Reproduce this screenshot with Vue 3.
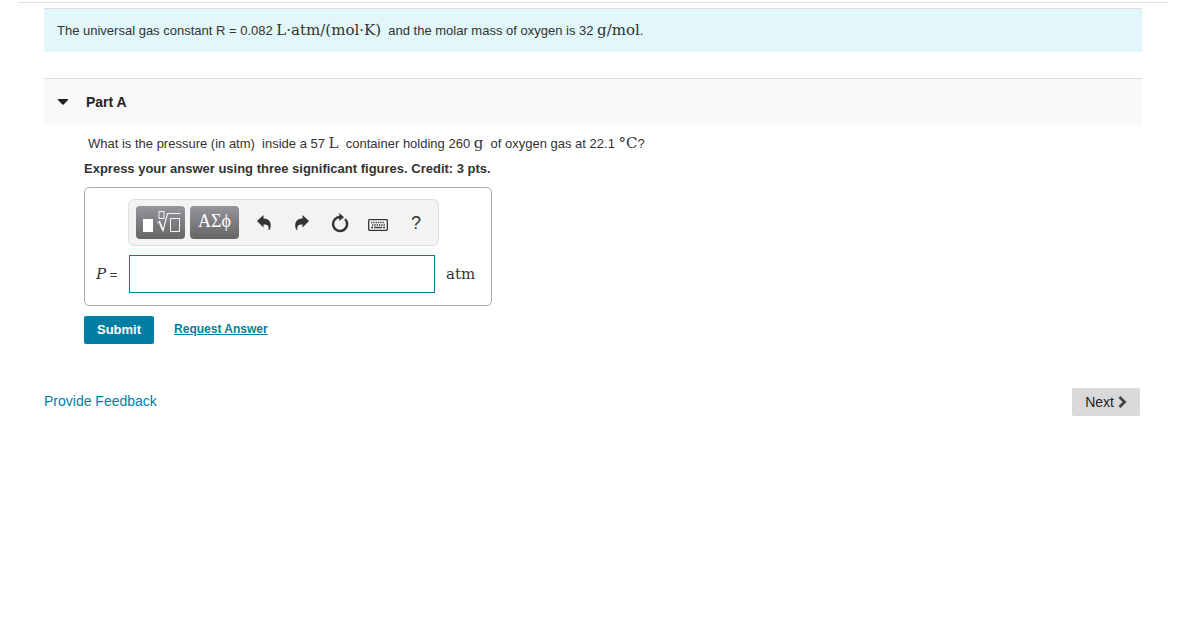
<script setup>
import { ref } from 'vue'

const answer = ref('')
const open = ref(true)
</script>

<template>
  <main class="page">
    <hr class="rule" />
    <div class="content">
      <p class="banner">
        The universal gas constant R = 0.082 <span class="math">L·atm/(mol·K)</span>&nbsp; and the molar mass of oxygen is 32 <span class="math">g/mol</span>.
      </p>

      <section>
        <h2 class="part">
          <button class="part-toggle" type="button" :aria-expanded="open" @click="open = !open">
            <svg width="12" height="8" viewBox="0 0 12 8" aria-hidden="true"><path d="M1 1h10q.4.6 0 1L6.600 6.500q-.6.5-1.200 0L1 2Q.6 1.500 1 1Z" fill="#222" /></svg>
            <span>Part A</span>
          </button>
        </h2>

        <form v-show="open" class="body" @submit.prevent>
          <p class="question">
            What is the pressure (in atm)&nbsp; inside a 57 <span class="math">L</span>&nbsp; container holding 260 <span class="math">g</span>&nbsp; of oxygen gas at 22.1 <span class="math">°C</span>?
          </p>
          <p class="instructions">Express your answer using three significant figures. Credit: 3 pts.</p>

          <div class="answer-box">
            <div class="toolbar" role="toolbar" aria-label="Equation tools">
              <button class="key" type="button" aria-label="Templates">
                <svg width="49" height="33" viewBox="0 0 49 33" aria-hidden="true">
                  <rect x="7" y="13" width="10" height="13" fill="#fff" />
                  <g fill="none" stroke="#f4f4f4">
                    <rect x="23" y="5.500" width="5" height="7" />
                    <path d="M21.500 17l2-1.500 3.500 9L31.500 7.500H44.500" stroke-width="1.200" />
                    <path d="M23.500 16l3.300 8" stroke-width="1.800" />
                    <rect x="34.500" y="12.500" width="9" height="13" />
                  </g>
                </svg>
              </button>
              <button class="key greek" type="button" aria-label="Greek symbols">ΑΣϕ</button>
              <div class="tools">
                <button class="tool" type="button" aria-label="Undo">
                  <svg width="16" height="18" viewBox="0 0 16 18" aria-hidden="true"><path d="M1 7L7.500 1v3.600c6 .2 8.500 4 6.700 10.400l-1.700 1.500c.8-4.200-.2-6.100-5-6.100V13.500Z" fill="#333" /></svg>
                </button>
                <button class="tool" type="button" aria-label="Redo">
                  <svg width="16" height="18" viewBox="0 0 16 18" aria-hidden="true"><path d="M15 7L8.500 1v3.600C2.500 4.800 0 8.600 1.800 15l1.700 1.500C2.700 12.300 3.700 10.400 8.500 10.400V13.500Z" fill="#333" /></svg>
                </button>
                <button class="tool" type="button" aria-label="Reset">
                  <svg width="18" height="20" viewBox="0 0 18 20" aria-hidden="true"><path d="M9.500 4A7 7 0 1 0 14 6" fill="none" stroke="#333" stroke-width="2.400" /><path d="M8.300 0L13 4.300 8.300 8Z" fill="#333" /></svg>
                </button>
                <button class="tool low" type="button" aria-label="Keyboard shortcuts">
                  <svg width="20" height="12" viewBox="0 0 20 12" aria-hidden="true">
                    <rect x=".7" y=".7" width="18.600" height="10.600" rx=".8" fill="#fff" stroke="#333" stroke-width="1.300" />
                    <path d="M3 3.500h14M4 6h13" stroke="#333" stroke-width="1.400" stroke-dasharray="1.400 .9" />
                    <path d="M3 8.500h2M6 8.500h8M15 8.500h2" stroke="#333" stroke-width="1.300" />
                  </svg>
                </button>
                <button class="tool help" type="button" aria-label="Help">?</button>
              </div>
            </div>

            <div class="entry">
              <label for="answer"><i>P</i> =</label>
              <input id="answer" v-model="answer" type="text" autocomplete="off" />
              <span class="unit">atm</span>
            </div>
          </div>

          <div class="actions">
            <button class="submit" type="submit">Submit</button>
            <a class="request" href="#">Request Answer</a>
          </div>
        </form>
      </section>

      <footer class="footer">
        <a class="feedback" href="#">Provide Feedback</a>
        <button class="next" type="button">
          Next
          <svg width="9" height="12" viewBox="0 0 9 12" aria-hidden="true"><path d="M1.500 1L6.500 6l-5 5" fill="none" stroke="#444" stroke-width="2.800" /></svg>
        </button>
      </footer>
    </div>
  </main>
</template>

<style>
body {
  background: #fff;
}
</style>

<style scoped>
.page {
  padding: 2px 25px 0 18px;
  font: 13px/20px "Liberation Sans", Arial, sans-serif;
  color: #333;
}
.page * {
  box-sizing: border-box;
}
p,
h2 {
  margin: 0;
}
button {
  margin: 0;
  padding: 0;
  border: 0;
  background: none;
  color: inherit;
  font: inherit;
  cursor: pointer;
}
svg {
  display: block;
  flex: none;
}
.rule {
  height: 1px;
  margin: 0;
  border: 0;
  background: #ddd;
}
.content {
  margin: 5px 26px 0;
}
.banner {
  padding: 12px 13px 11px;
  border-top: 1px solid #ddd;
  background: #e1f7f9;
}
.math {
  font-family: "DejaVu Serif", serif;
  font-size: 15px;
  line-height: 1px;
}
.part {
  margin-top: 26px;
  border-top: 1px solid #ddd;
  background: #f9f9f9;
  font-size: 14px;
  color: #222;
}
.part-toggle {
  display: flex;
  align-items: center;
  gap: 17px;
  width: 100%;
  height: 46px;
  padding-left: 13px;
  font-weight: bold;
}
.body {
  padding: 9px 0 0 40px;
}
.question {
  padding-left: 4px;
}
.instructions {
  margin-top: 5px;
  font-weight: bold;
}
.answer-box {
  width: fit-content;
  margin-top: 8px;
  padding: 11px 16px 12px 11px;
  border: 1px solid #aaa;
  border-radius: 5px;
}
.toolbar {
  display: flex;
  align-items: center;
  gap: 5px;
  width: fit-content;
  height: 47px;
  margin-left: 32px;
  padding: 0 3px 0 7px;
  border: 1px solid #ddd;
  border-radius: 6px;
  background: #f3f3f3;
}
.key {
  width: 49px;
  height: 33px;
  border-radius: 4px;
  background: linear-gradient(#96949d, #656565);
  color: #fff;
}
.greek {
  padding-bottom: 3px;
  font: 18px/30px "Liberation Serif", serif;
}
.tools {
  display: flex;
  margin-left: 1px;
}
.tool {
  display: flex;
  align-items: center;
  justify-content: center;
  width: 38px;
  height: 33px;
}
.low {
  padding-top: 4px;
}
.help {
  font-size: 18px;
}
.entry {
  display: flex;
  align-items: center;
  margin-top: 9px;
}
.entry label {
  width: 33px;
}
.entry i,
.unit {
  font-family: "DejaVu Serif", serif;
  font-size: 15px;
  line-height: 20px;
}
.entry input {
  width: 306px;
  height: 38px;
  padding: 0 8px;
  border: 1px solid #007fa3;
  border-radius: 0;
  outline: none;
  background: #fff;
  font: inherit;
}
.unit {
  margin-left: 11px;
}
.actions {
  display: flex;
  align-items: center;
  gap: 20px;
  margin-top: 10px;
}
.submit {
  height: 28px;
  padding: 0 13px;
  border-radius: 2px;
  background: #007fa3;
  color: #fff;
  font-weight: bold;
}
.request {
  padding-bottom: 2px;
  color: #007fa3;
  font-size: 12px;
  font-weight: bold;
}
.footer {
  display: flex;
  align-items: center;
  justify-content: space-between;
  margin-top: 44px;
  padding-right: 2px;
  font-size: 14px;
}
.feedback {
  padding-bottom: 2px;
  color: #007fa3;
  text-decoration: none;
}
.next {
  display: flex;
  align-items: center;
  gap: 4px;
  height: 28px;
  padding: 0 13px;
  border-radius: 2px;
  background: #d9d9d9;
  color: #222;
}
</style>
